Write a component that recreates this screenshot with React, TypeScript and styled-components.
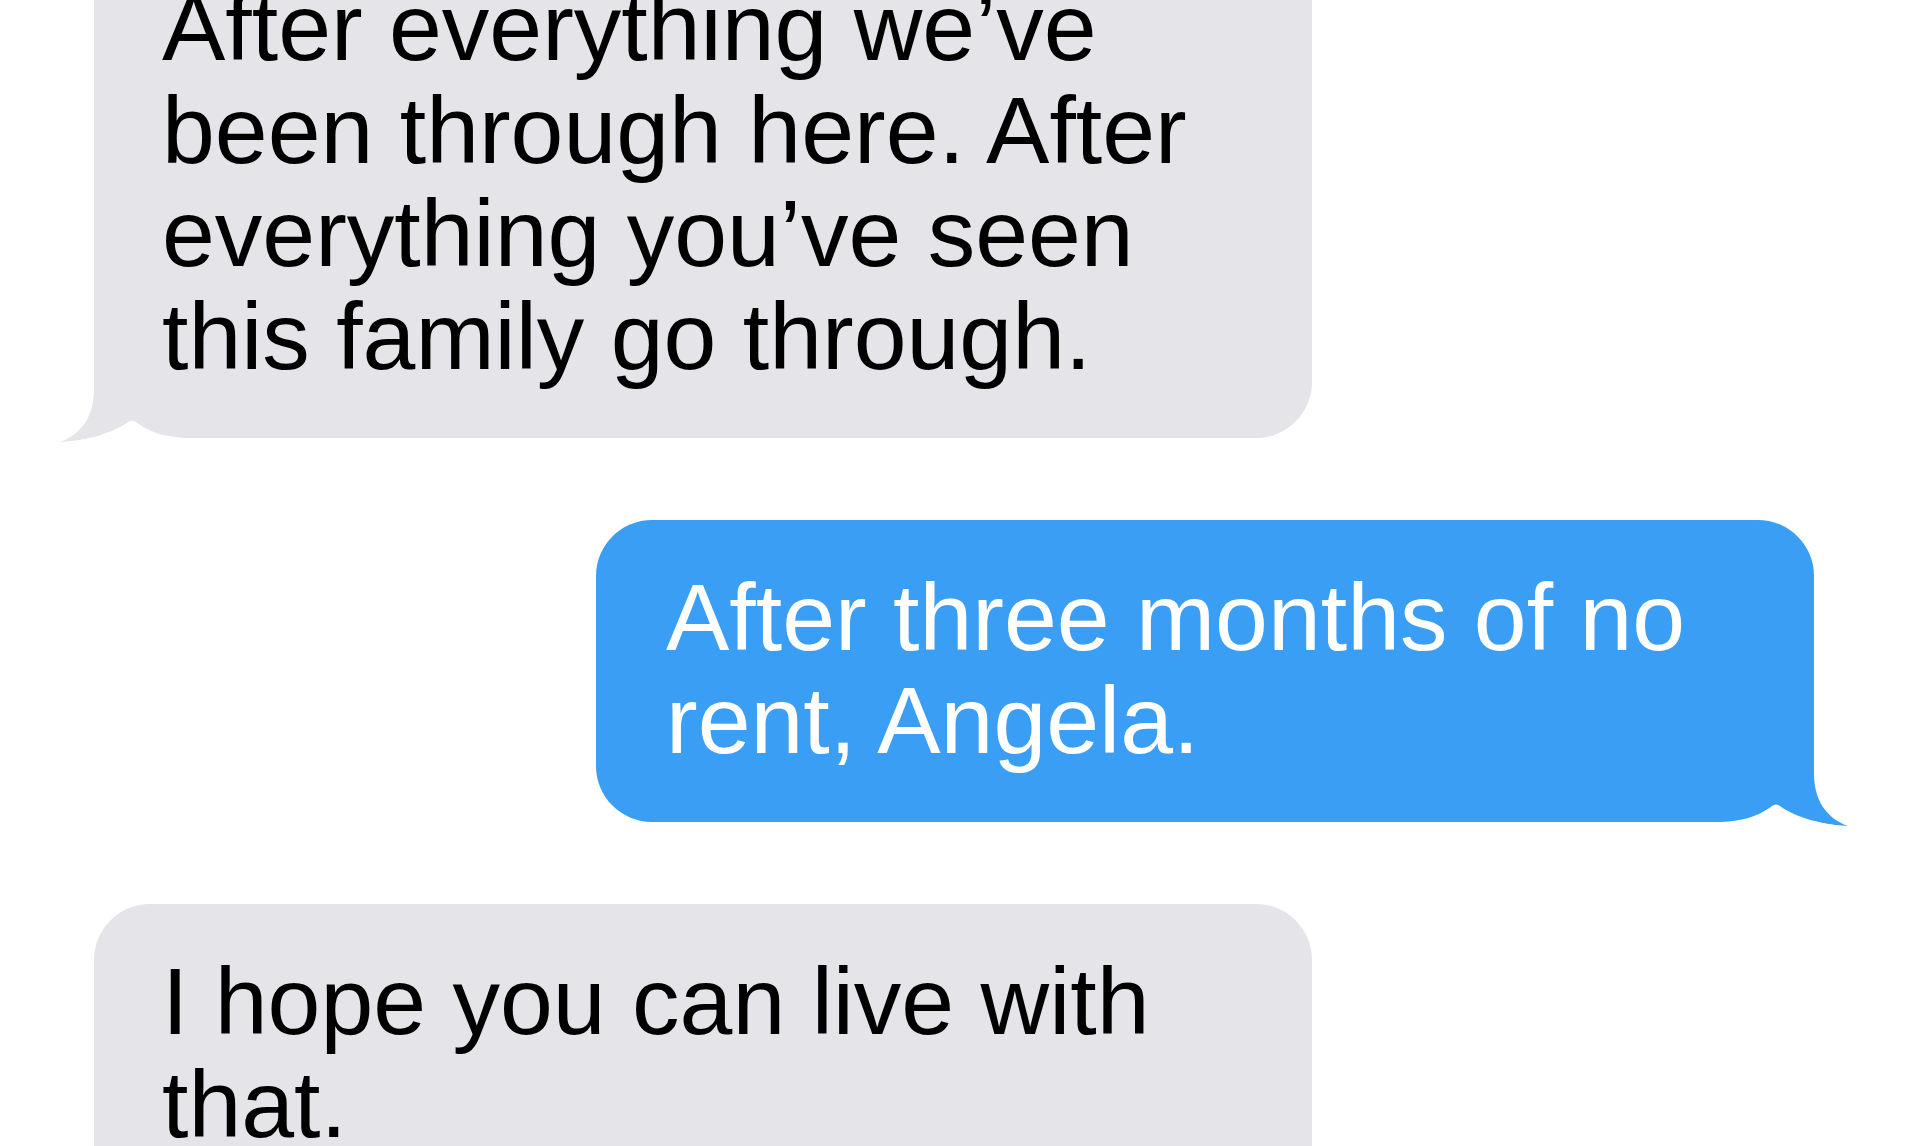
import React from 'react'
import styled, { createGlobalStyle } from 'styled-components';

const GlobalStyle = createGlobalStyle`
  html, body {
    margin: 0;
    padding: 0;
    background: #ffffff;
    overflow: hidden;
  }
`

const Thread = styled.div`
  display: flex;
  flex-direction: column;
  gap: 82px;
  margin-top: -70px;
  padding: 0 94px;
  font-family: "Liberation Sans", Arial, Helvetica, sans-serif;
`

const Bubble = styled.div<{ $mine?: boolean }>`
  position: relative;
  box-sizing: border-box;
  width: 1218px;
  align-self: ${p => p.$mine ? 'flex-end' : 'flex-start'};
  padding: 46px 60px 50px ${p => p.$mine ? '70px' : '68px'};
  border-radius: 56px;
  ${p => p.$mine ? 'border-bottom-right-radius: 0;' : 'border-bottom-left-radius: 0;'}
  background: ${p => p.$mine ? '#3b9ef5' : '#e4e4e9'};
  color: ${p => p.$mine ? '#ffffff' : '#000000'};
  font-size: 95px;
  line-height: 103px;
`

const TailSvg = styled.svg<{ $mine?: boolean }>`
  position: absolute;
  bottom: -6px;
  width: 150px;
  height: 66px;
  ${p => p.$mine
    ? 'right: -34px; transform: scaleX(-1);'
    : 'left: -34px;'}
`

interface MessageProps {
  mine?: boolean,
  tail?: boolean,
  children?: any,
}

// hook-shaped tail under the bubble corner, with the white notch cut out beside it
const TAIL_EDGE = 'C30,63 56,53 68,44 Q72,41 76,44 C88,53 104,60 132,60'

function Tail({ mine }: { mine?: boolean }) {
  return (
    <TailSvg $mine={mine} viewBox="0 0 150 66">
      <path
        d={`M34,0 L34,11 C34,38 22,56 0,64 ${TAIL_EDGE} L150,60 L150,0 Z`}
        fill={mine ? '#3b9ef5' : '#e4e4e9'}
      />
      <path
        d={`M0,64 ${TAIL_EDGE} L150,60 L150,66 L0,66 Z`}
        fill="#ffffff"
      />
    </TailSvg>
  )
}

function Message({ mine, tail = true, children }: MessageProps) {
  return (
    <Bubble $mine={mine}>
      {children}
      {tail && <Tail mine={mine} />}
    </Bubble>
  )
}

export default function App() {
  return (
    <>
      <GlobalStyle />
      <Thread>
        <Message>
          After everything we’ve been through here. After everything you’ve seen this family go through.
        </Message>
        <Message mine>
          After three months of no rent, Angela.
        </Message>
        <Message tail={false}>
          I hope you can live with that.
          <br />
          &nbsp;
        </Message>
      </Thread>
    </>
  )
}
